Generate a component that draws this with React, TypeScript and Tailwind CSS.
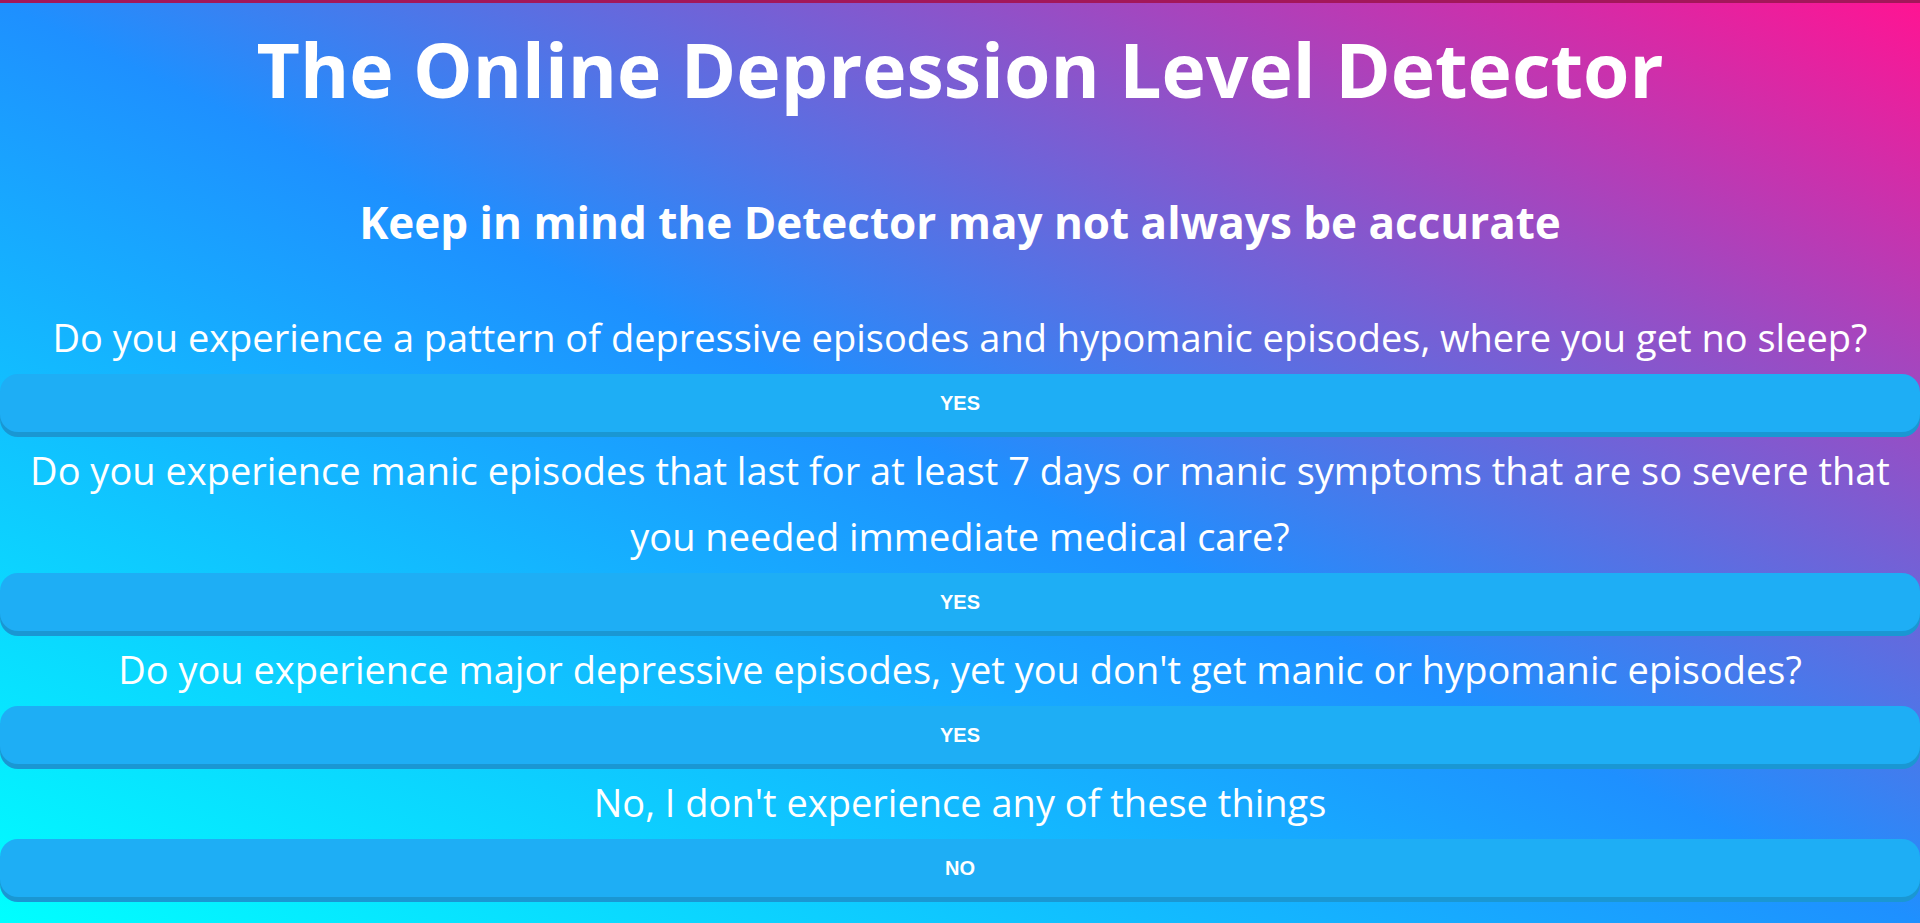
import React from "react";

type Question = {
  text: string;
  answer: string;
};

const questions: Question[] = [
  {
    text: "Do you experience a pattern of depressive episodes and hypomanic episodes, where you get no sleep?",
    answer: "YES",
  },
  {
    text: "Do you experience manic episodes that last for at least 7 days or manic symptoms that are so severe that you needed immediate medical care?",
    answer: "YES",
  },
  {
    text: "Do you experience major depressive episodes, yet you don't get manic or hypomanic episodes?",
    answer: "YES",
  },
  {
    text: "No, I don't experience any of these things",
    answer: "NO",
  },
];

function QuestionBlock({ q }: { q: Question }) {
  return (
    <div className="flex flex-col">
      <p className="px-[20px] text-[38px] leading-[66px] font-normal">{q.text}</p>
      <button
        type="button"
        className="mt-[4px] mb-[5px] h-[58px] w-full rounded-[18px] bg-[#1eaef5] shadow-[0_5px_0_#1a97d3] font-['Liberation_Sans',Arial,sans-serif] text-[20px] font-bold text-white"
      >
        {q.answer}
      </button>
    </div>
  );
}

export default function App() {
  return (
    <div className="min-h-screen w-full border-t-[3px] border-[#a3175a] bg-[linear-gradient(to_top_right,#00ffff,#1e90ff,#ff1493)] text-center text-white font-['Open_Sans',sans-serif]">
      <h1 className="pt-[18px] text-[75px] leading-[96px] font-bold">
        The Online Depression Level Detector
      </h1>
      <h2 className="mt-[75px] text-[44px] leading-[60px] font-bold">
        Keep in mind the Detector may not always be accurate
      </h2>
      <div className="mt-[52px] flex flex-col">
        {questions.map((q, i) => (
          <QuestionBlock key={i} q={q} />
        ))}
      </div>
    </div>
  );
}
